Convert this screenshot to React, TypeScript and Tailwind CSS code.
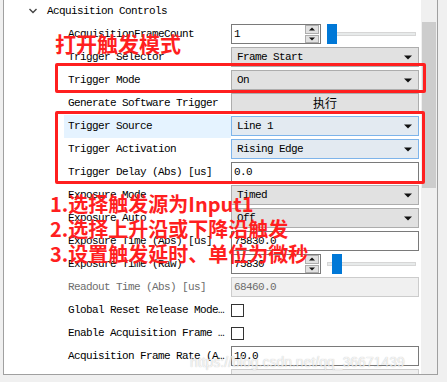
import type { ReactNode } from 'react';

// Camera feature tree (Acquisition Controls) with red annotations on top

const mono = "font-['Liberation_Mono','Noto_Sans_CJK_SC',monospace] text-[11px] tracking-[-0.6px]";

function Row({
  label,
  children,
  highlight = false,
  dim = false,
}: {
  label: string;
  children?: ReactNode;
  highlight?: boolean;
  dim?: boolean;
}) {
  return (
    <div className="flex h-[23px] shrink-0">
      <div className="w-[60px] shrink-0" />
      <div
        className={`w-[167px] shrink-0 pl-[4px] flex items-center whitespace-nowrap overflow-hidden ${
          highlight ? 'bg-[#e5f3ff]' : ''
        } ${dim ? 'text-[#6d6d6d]' : 'text-black'}`}
      >
        {label}
      </div>
      <div className="w-[188px] shrink-0 pt-[1px]">{children}</div>
    </div>
  );
}

function Select({ value, active = false }: { value: string; active?: boolean }) {
  return (
    <div
      className={`h-[20px] border flex items-center justify-between pl-[5px] pr-[6px] ${
        active ? 'bg-[#e3eaf1] border-[#7eb4ea]' : 'bg-[#e1e1e1] border-[#adadad]'
      }`}
    >
      <span>{value}</span>
      <svg width="8" height="5" viewBox="0 0 8 5">
        <path d="M0 0.5h8L4 4.5z" fill="#111" />
      </svg>
    </div>
  );
}

function TextBox({ value, disabled = false }: { value: string; disabled?: boolean }) {
  return (
    <div
      className={`h-[20px] border flex items-center pl-[2px] ${
        disabled ? 'bg-[#f0f0f0] border-[#cccccc] text-[#6d6d6d]' : 'bg-white border-[#7a7a7a]'
      }`}
    >
      {value}
    </div>
  );
}

function SpinSlider({ value, thumb }: { value: string; thumb: number }) {
  return (
    <div className="flex items-center h-[20px]">
      <div className="w-[90px] h-[20px] border border-[#7a7a7a] bg-white flex items-center pl-[2px]">
        <span className="flex-1">{value}</span>
        <div className="w-[14px] h-[18px] flex flex-col gap-[1px] mr-[1px]">
          <div className="flex-1 bg-[#e1e1e1] border border-[#adadad] flex items-center justify-center">
            <svg width="6" height="4" viewBox="0 0 6 4">
              <path d="M0 3.5h6L3 0.5z" fill="#111" />
            </svg>
          </div>
          <div className="flex-1 bg-[#e1e1e1] border border-[#adadad] flex items-center justify-center">
            <svg width="6" height="4" viewBox="0 0 6 4">
              <path d="M0 0.5h6L3 3.5z" fill="#111" />
            </svg>
          </div>
        </div>
      </div>
      <div className="ml-[6px] w-[89px] h-[20px] relative flex items-center">
        <div className="w-full h-[4px] bg-[#e7eaea] border border-[#d6d6d6]" />
        <div className="absolute top-0 h-[20px] w-[10px] bg-[#0078d7]" style={{ left: thumb }} />
      </div>
    </div>
  );
}

function CheckBox() {
  return (
    <div className="h-[20px] flex items-center">
      <div className="w-[13px] h-[13px] border border-[#333] bg-white" />
    </div>
  );
}

export default function App() {
  return (
    <div className={`relative w-[447px] h-[382px] bg-[#f0f0f0] overflow-hidden ${mono}`}>
      <div className="ml-[3px] w-[435px] h-[375px] bg-white border-l border-r border-b border-[#a0a0a0] flex">
        {/* tree */}
        <div className="w-[417px] h-full overflow-hidden flex flex-col">
          <div className="flex h-[23px] shrink-0 items-center">
            <div className="w-[25px]" />
            <svg width="8" height="6" viewBox="0 0 8 6" className="mb-[1px]">
              <path d="M0.5 1l3.5 3.5L7.5 1" stroke="#444" strokeWidth="1.4" fill="none" />
            </svg>
            <span className="ml-[10px] text-black">Acquisition Controls</span>
          </div>
          <Row label="AcquisitionFrameCount">
            <SpinSlider value="1" thumb={0} />
          </Row>
          <Row label="Trigger Selector">
            <Select value="Frame Start" />
          </Row>
          <Row label="Trigger Mode">
            <Select value="On" />
          </Row>
          <Row label="Generate Software Trigger">
            <div className="h-[20px] bg-[#e1e1e1] border border-[#adadad] flex items-center justify-center font-['Noto_Sans_CJK_SC',sans-serif] text-[12px] tracking-normal">
              执行
            </div>
          </Row>
          <Row label="Trigger Source" highlight>
            <Select value="Line 1" active />
          </Row>
          <Row label="Trigger Activation">
            <Select value="Rising Edge" active />
          </Row>
          <Row label="Trigger Delay (Abs) [us]">
            <TextBox value="0.0" />
          </Row>
          <Row label="Exposure Mode">
            <Select value="Timed" />
          </Row>
          <Row label="Exposure Auto">
            <Select value="Off" />
          </Row>
          <Row label="Exposure Time (Abs) [us]">
            <TextBox value="75830.0" />
          </Row>
          <Row label="Exposure Time (Raw)">
            <SpinSlider value="75830" thumb={5} />
          </Row>
          <Row label="Readout Time (Abs) [us]" dim>
            <TextBox value="68460.0" disabled />
          </Row>
          <Row label="Global Reset Release Mode…">
            <CheckBox />
          </Row>
          <Row label="Enable Acquisition Frame …">
            <CheckBox />
          </Row>
          <Row label="Acquisition Frame Rate (A…">
            <TextBox value="10.0" />
          </Row>
          <Row label="Resulting Frame Rate (Ab…" dim>
            <TextBox value="" disabled />
          </Row>
        </div>
        {/* scrollbar */}
        <div className="w-[16px] h-full bg-[#f0f0f0] pt-[22px]">
          <div className="mx-[1px] h-[166px] bg-[#cdcdcd]" />
        </div>
      </div>

      {/* watermark */}
      <div className="absolute left-[190px] top-[352px] font-['Liberation_Sans',sans-serif] text-[14px] tracking-normal text-white/80 [text-shadow:0_0_1px_rgba(0,0,0,0.3)]">
        https://blog.csdn.net/qq_36671439
      </div>

      {/* red annotations */}
      <div className="absolute left-[55px] top-[63px] w-[371px] h-[30px] border-[3px] border-[#ff1f1f] rounded-[2px]" />
      <div className="absolute left-[55px] top-[111px] w-[370px] h-[73px] border-[3px] border-[#ff1f1f] rounded-[2px]" />
      <div className="absolute left-[55px] top-[33px] font-['Noto_Sans_CJK_SC',sans-serif] text-[21px] leading-[21px] font-bold tracking-normal text-[#ff1f1f]">
        打开触发模式
      </div>
      <div className="absolute left-[50px] top-[191px] font-['Noto_Sans_CJK_SC',sans-serif] text-[20px] leading-[25px] font-bold tracking-normal text-[#ff1f1f] whitespace-nowrap">
        <div>1.选择触发源为Input1</div>
        <div>2.选择上升沿或下降沿触发</div>
        <div>3.设置触发延时、单位为微秒</div>
      </div>
    </div>
  );
}
